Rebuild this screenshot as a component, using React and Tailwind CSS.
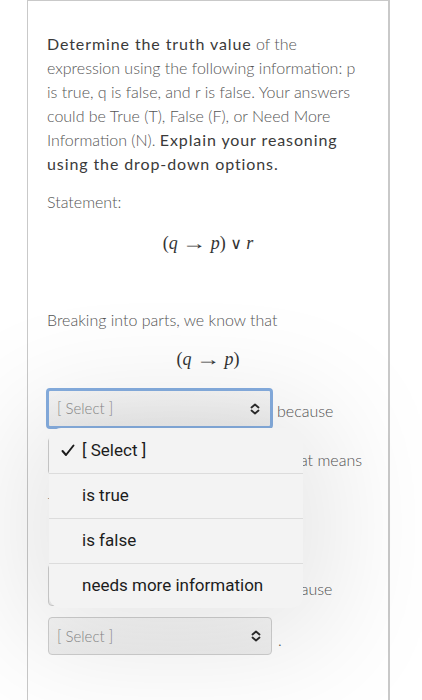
import React from "react";

const Chevrons = () => (
  <svg width="10" height="12" viewBox="0 0 10 12" fill="none" stroke="#2b2b2b" strokeWidth="1.8" strokeLinecap="round" strokeLinejoin="round">
    <path d="M1.5 4.5 5 1.5l3.5 3" />
    <path d="M1.5 7.5 5 10.5l3.5-3" />
  </svg>
);

const Select = ({ focused = false, className = "" }) => (
  <div
    className={
      "flex items-center justify-between h-[38px] w-[224px] rounded-[4px] bg-gradient-to-b from-[#f7f7f7] to-[#efefef] pl-[8px] pr-[10px] " +
      (focused
        ? "border-[3px] border-[#86aee0] h-[41px] w-[227px] pl-[7px] pr-[8px] "
        : "border border-[#cfcfcf] ") +
      className
    }
  >
    <span className="text-[15px] font-light text-[#8a8a8a]">[ Select ]</span>
    <Chevrons />
  </div>
);

const Math = ({ children }) => (
  <div className="text-center text-[18px] text-[#333]" style={{ fontFamily: '"Liberation Serif", "DejaVu Serif", serif' }}>
    {children}
  </div>
);

const Arrow = () => <span className="inline-block mx-[3px] scale-x-[1.35]">→</span>;

const options = ["[ Select ]", "is true", "is false", "needs more information"];

export default function App() {
  return (
    <div
      className="min-h-[700px] h-[700px] overflow-hidden bg-white"
      style={{ fontFamily: "Lato, 'Open Sans', sans-serif" }}
    >
      <div className="relative ml-[27px] w-[363px] h-[760px] border border-[#c9c9c9] border-r-2 bg-white px-[19px] pt-[31px] font-light">
        <p className="text-[16px] leading-[24px] text-[#555]">
          <span className="tracking-[0.9px] text-[#3a3a3a] font-normal">Determine the truth value</span> of the
          expression using the following information: p is true, q is false, and r is false. Your answers could be
          True (T), False (F), or Need More Information (N).{" "}
          <span className="tracking-[0.9px] text-[#3a3a3a] font-normal">
            Explain your reasoning using the drop-down options.
          </span>
        </p>

        <p className="mt-[14px] text-[16px] leading-[24px] text-[#555]">Statement:</p>

        <div className="mt-[16px]">
          <Math>
            (<i>q</i> <Arrow /> <i>p</i>) <span className="font-light text-[16px]">∨</span> <i>r</i>
          </Math>
        </div>

        <p className="mt-[51px] text-[16px] leading-[24px] text-[#555]">Breaking into parts, we know that</p>

        <div className="mt-[14px]">
          <Math>
            (<i>q</i> <Arrow /> <i>p</i>)
          </Math>
        </div>

        <div className="mt-[15px] -ml-[1px] flex items-center gap-[4px] text-[16px] text-[#555]">
          <Select focused />
          <span className="mt-[4px]">because</span>
        </div>

        <div className="mt-[8px] ml-[1px] flex items-center gap-[10px] text-[16px] text-[#555]">
          <Select />
          <span className="mt-[8px]">That means</span>
        </div>

        <div className="mt-[8px] h-[28px] leading-[28px] text-[16px] text-[#555]">- (q → p) is</div>

        <div className="mt-[53px] ml-[1px] flex items-center gap-[4px] text-[16px] text-[#555]">
          <Select className="h-[42px]" />
          <span className="mt-[8px]">because</span>
        </div>

        <div className="mt-[11px] ml-[1px] flex items-center gap-[6px] text-[16px] text-[#555]">
          <Select />
          <span className="mt-[8px]">.</span>
        </div>

        {/* open dropdown menu */}
        <div
          className="absolute left-[21px] top-[427px] w-[254px] rounded-[12px] bg-[#f3f3f3] shadow-[0_8px_120px_30px_rgba(0,0,0,0.10)] overflow-hidden font-normal"
          style={{ fontFamily: "Roboto, Inter, sans-serif" }}
        >
          {options.map((o, i) => (
            <div
              key={o}
              className={
                "relative h-[45px] flex items-center pl-[33px] text-[17px] text-[#1c1c1c] " +
                (i > 0 ? "border-t border-[#dcdcdc]" : "")
              }
            >
              {i === 0 && (
                <svg className="absolute left-[12px] top-[16px]" width="14" height="13" viewBox="0 0 14 13" fill="none" stroke="#1c1c1c" strokeWidth="2" strokeLinecap="round" strokeLinejoin="round">
                  <path d="M1.5 7 5 11 12.5 1.5" />
                </svg>
              )}
              {o}
            </div>
          ))}
        </div>
      </div>
    </div>
  );
}
